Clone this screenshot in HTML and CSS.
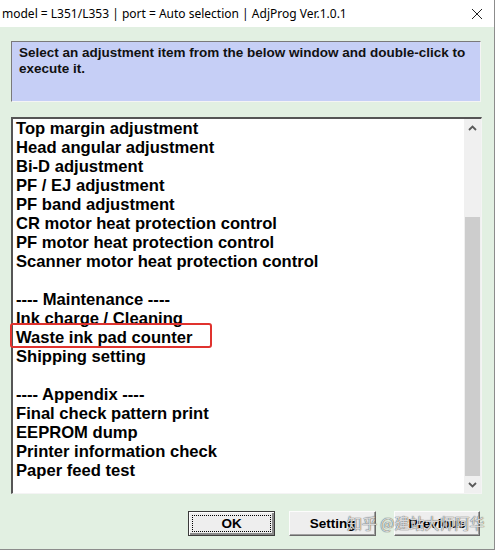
FILE: index.html
```html
<!DOCTYPE html>
<html>
<head>
    <title>AdjProg</title>
    <link rel="stylesheet" href="styles.css">
</head>
<body>
    <div class="window">
        <div class="titlebar">
            <span class="title">model = L351/L353 | port = Auto selection | AdjProg Ver.1.0.1</span>
            <svg class="close" width="12" height="12" viewBox="0 0 12 12">
                <path d="M1 1L11 11M11 1L1 11" stroke="#222" stroke-width="1" fill="none"/>
            </svg>
        </div>
        <div class="client">
            <div class="info">Select an adjustment item from the below window and double-click to execute it.</div>

            <div class="list">
                <div class="items">
                    <div class="item">Top margin adjustment</div>
                    <div class="item">Head angular adjustment</div>
                    <div class="item">Bi-D adjustment</div>
                    <div class="item">PF / EJ adjustment</div>
                    <div class="item">PF band adjustment</div>
                    <div class="item">CR motor heat protection control</div>
                    <div class="item">PF motor heat protection control</div>
                    <div class="item">Scanner motor heat protection control</div>
                    <div class="item"></div>
                    <div class="item">---- Maintenance ----</div>
                    <div class="item">Ink charge / Cleaning</div>
                    <div class="item marked">Waste ink pad counter</div>
                    <div class="item">Shipping setting</div>
                    <div class="item"></div>
                    <div class="item">---- Appendix ----</div>
                    <div class="item">Final check pattern print</div>
                    <div class="item">EEPROM dump</div>
                    <div class="item">Printer information check</div>
                    <div class="item">Paper feed test</div>
                </div>
                <div class="scrollbar">
                    <div class="sb-btn">
                        <svg width="9" height="6" viewBox="0 0 9 6"><path d="M1 5L4.5 1.5L8 5" stroke="#5a5a5a" stroke-width="1.8" fill="none"/></svg>
                    </div>
                    <div class="sb-track"><div class="sb-thumb"></div></div>
                    <div class="sb-btn">
                        <svg width="9" height="6" viewBox="0 0 9 6"><path d="M1 1L4.5 4.5L8 1" stroke="#5a5a5a" stroke-width="1.8" fill="none"/></svg>
                    </div>
                </div>
            </div>

            <div class="buttons">
                <button class="btn default"><span class="focus">OK</span></button>
                <button class="btn">Setting</button>
                <button class="btn last">Previous</button>
            </div>
        </div>
    </div>
    <div class="watermark">知乎 @建站大师阿华</div>
</body>
</html>
```

FILE: styles.css
```css
body {
    margin: 0;
    background-color: #fff;
    font-family: "Liberation Sans", Arial, sans-serif;
}
.window {
    width: 494px;
    height: 549px;
    border-right: 1px solid #8c8c8c;
    border-bottom: 1px solid #8c8c8c;
    display: flex;
    flex-direction: column;
    background-color: #e2f0e2;
}
.titlebar {
    height: 27px;
    background-color: #fff;
    display: flex;
    align-items: center;
    justify-content: space-between;
    padding: 0 11px 0 2px;
}
.title {
    font-family: "Noto Sans", "Noto Sans CJK SC", sans-serif;
    font-size: 12px;
    color: #000;
}
.client {
    flex: 1;
    display: flex;
    flex-direction: column;
    padding: 14px 0 0 11px;
}
.info {
    box-sizing: border-box;
    width: 470px;
    height: 61px;
    border: 1px solid;
    border-color: #7a7a7a #f4f4f4 #f4f4f4 #7a7a7a;
    background-color: #c6cff6;
    padding: 3px 7px;
    font-size: 13.5px;
    font-weight: bold;
    line-height: 16px;
    color: #111;
}
.list {
    box-sizing: border-box;
    width: 471px;
    height: 377px;
    margin-top: 15px;
    border-style: solid;
    border-width: 2px 1px 1px 2px;
    border-color: #555 #f4f4f4 #f4f4f4 #555;
    background-color: #fff;
    display: flex;
}
.items {
    flex: 1;
    padding-left: 3px;
    font-size: 16.6px;
    font-weight: bold;
    line-height: 19px;
    color: #000;
}
.item {
    height: 19px;
    white-space: nowrap;
}
.marked {
    position: relative;
}
.marked::after {
    content: '';
    position: absolute;
    left: -6px;
    top: -5px;
    width: 198px;
    height: 21px;
    border: 2px solid #e0322e;
    border-radius: 3px;
}
.scrollbar {
    width: 17px;
    display: flex;
    flex-direction: column;
    background-color: #f0f0f0;
}
.sb-btn {
    height: 17px;
    display: flex;
    align-items: center;
    justify-content: center;
}
.sb-track {
    flex: 1;
    display: flex;
    flex-direction: column;
    padding: 81px 1px 0 1px;
}
.sb-thumb {
    flex: 1;
    background-color: #cdcdcd;
}
.buttons {
    display: flex;
    margin-top: 17px;
    padding-left: 177px;
}
.btn {
    box-sizing: border-box;
    width: 88px;
    height: 25px;
    margin-right: 14px;
    padding: 0;
    border: 1px solid;
    border-color: #fcfcfc #6a6a6a #6a6a6a #fcfcfc;
    box-shadow: inset -1px -1px 0 #a0a0a0;
    background-color: #eeeeee;
    font-family: "Liberation Sans", Arial, sans-serif;
    font-size: 13.5px;
    font-weight: bold;
    color: #000;
}
.btn.last {
    width: 87px;
    margin-left: 4px;
}
.btn.default {
    border: 1px solid #3a3a3a;
    box-shadow: inset 1px 1px 0 #fcfcfc, inset -2px -2px 0 #8a8a8a;
    padding: 3px;
}
.focus {
    display: flex;
    align-items: center;
    justify-content: center;
    height: 100%;
    border: 1px dotted #000;
    box-sizing: border-box;
}
.watermark {
    position: absolute;
    left: 347px;
    top: 512px;
    font-family: "Noto Sans CJK SC", sans-serif;
    font-size: 15px;
    color: rgba(255, 255, 255, 0.8);
    text-shadow: 0 0 1px rgba(60, 60, 60, 0.8), 0 0 1px rgba(60, 60, 60, 0.8);
    white-space: nowrap;
}
```
